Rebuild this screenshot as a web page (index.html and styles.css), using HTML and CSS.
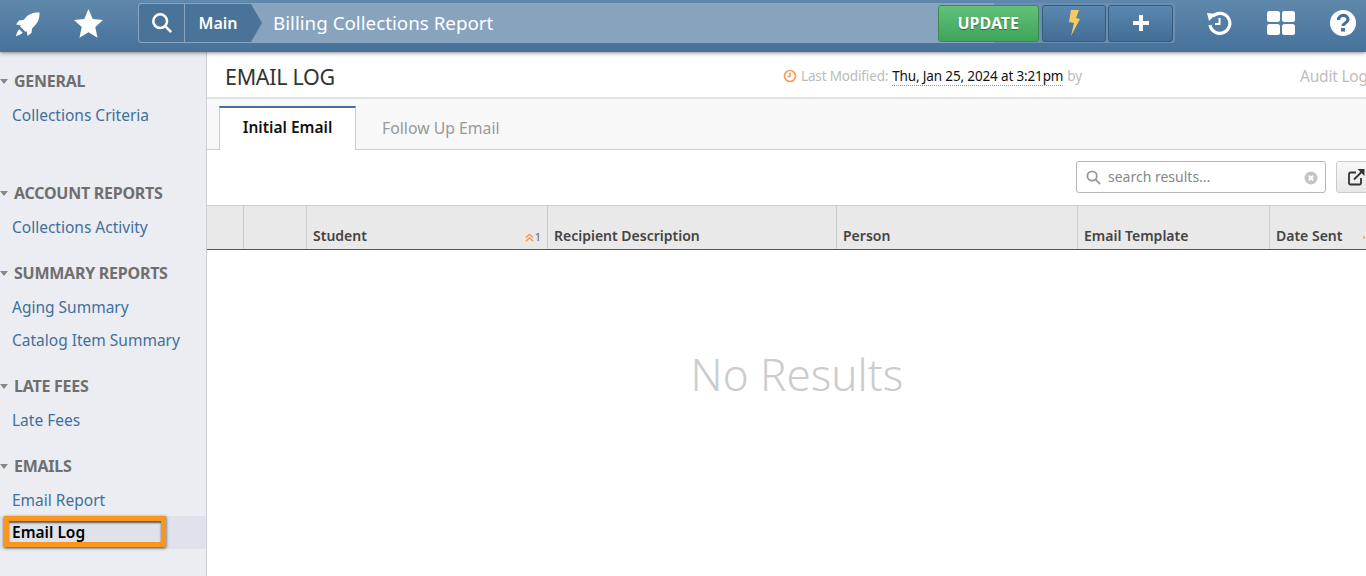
FILE: index.html
```html
<!DOCTYPE html>
<html lang="en">
<head>
<meta charset="utf-8">
<title>Billing Collections Report</title>
<link rel="stylesheet" href="styles.css">
</head>
<body>
<header class="topbar">
  <div class="top-left">
    <svg class="ico rocket" viewBox="0 0 24 24"><path d="M23.500.5c-6.500-.5-11 1.800-14 5.800L8.500 7.500 3.800 8.200 1 12l4.600.6-.6 1.400 5 5 1.400-.6.600 4.600 3.800-2.800.7-4.700 1.200-1C20.800 11.600 24 7 23.500.5zM4 16.500C2.500 18 1.500 21 .8 23.200 3 22.500 6 21.500 7.500 20z"/></svg>
    <svg class="ico star" viewBox="0 0 24 24"><path d="M12 0l3.500 8.300 8.500.8-6.400 5.800 1.900 8.900L12 19.200l-7.500 4.600 1.900-8.900L0 9.100l8.500-.8z"/></svg>
  </div>
  <div class="crumbs">
    <div class="crumb-search"><svg class="ico mag" viewBox="0 0 24 24"><circle cx="10" cy="10" r="7.500"/><path d="M15.500 15.500L22 22"/></svg></div>
    <div class="crumb-main">Main</div>
    <div class="crumb-title">Billing Collections Report</div>
  </div>
  <div class="actions">
    <button class="btn-update">UPDATE</button>
    <button class="btn-blue"><svg class="bolt" viewBox="0 0 14 26"><path d="M4 0h8L9 8l4 1-9 17 3-13-5-1z"/></svg></button>
    <button class="btn-blue"><svg class="plus" viewBox="0 0 16 16"><path d="M6 0h4v6h6v4h-6v6H6v-6H0V6h6z"/></svg></button>
  </div>
  <div class="top-right">
    <svg class="ico hist" viewBox="0 0 26 26"><path class="hist-ring" d="M6.500 6.500A10 10 0 1 1 4 15"/><path class="hist-fill" d="M1 3l9 1-7 7z"/><path class="hist-hand" d="M13.500 8v6H9"/></svg>
    <svg class="ico grid-ico" viewBox="0 0 28 24"><rect x="0" y="0" width="13" height="11" rx="2.500"/><rect x="15" y="0" width="13" height="11" rx="2.500"/><rect x="0" y="13" width="13" height="11" rx="2.500"/><rect x="15" y="13" width="13" height="11" rx="2.500"/></svg>
    <svg class="ico help" viewBox="0 0 26 26"><circle cx="13" cy="13" r="13"/><path class="help-q" d="M8.500 10c0-6 9.500-6 9.500-.5 0 3.500-5 3.500-5 6.500"/><rect class="help-dot" x="11" y="18" width="4" height="3.500"/></svg>
  </div>
</header>
<div class="layout">
  <nav class="sidebar">
    <h3 class="group first">GENERAL</h3>
    <a class="link">Collections Criteria</a>
    <h3 class="group gap">ACCOUNT REPORTS</h3>
    <a class="link">Collections Activity</a>
    <h3 class="group">SUMMARY REPORTS</h3>
    <a class="link">Aging Summary</a>
    <a class="link">Catalog Item Summary</a>
    <h3 class="group">LATE FEES</h3>
    <a class="link">Late Fees</a>
    <h3 class="group">EMAILS</h3>
    <a class="link">Email Report</a>
    <a class="link active">Email Log<span class="callout"></span></a>
  </nav>
  <main class="content">
    <div class="page-head">
      <h1>EMAIL LOG</h1>
      <div class="modified">
        <svg class="clock" viewBox="0 0 14 14"><circle cx="7" cy="7" r="5.500"/><path d="M7 3.500V7.500H4.500"/></svg>
        <span class="muted">Last Modified:</span>
        <span class="date">Thu, Jan 25, 2024 at 3:21pm</span>
        <span class="muted">by</span>
      </div>
      <div class="audit">Audit Log</div>
    </div>
    <div class="tabs">
      <div class="tab on">Initial Email</div>
      <div class="tab">Follow Up Email</div>
    </div>
    <div class="toolbar">
      <div class="search">
        <svg class="s-mag" viewBox="0 0 16 16"><circle cx="6.500" cy="6.500" r="5"/><path d="M10.300 10.300L15 15"/></svg>
        <span class="s-text">search results...</span>
        <svg class="s-x" viewBox="0 0 14 14"><circle cx="7" cy="7" r="6.500"/><path d="M4.800 4.800l4.400 4.400M9.200 4.800l-4.400 4.400"/></svg>
      </div>
      <button class="export"><svg viewBox="0 0 18 18"><path class="e1" d="M14 10v5a1.500 1.500 0 0 1-1.500 1.500h-9A1.500 1.500 0 0 1 2 15V6a1.500 1.500 0 0 1 1.500-1.500H9"/><path class="e1" d="M7 11.500L15 3.500"/><path class="e2" d="M10.500 1h7v7z"/></svg></button>
    </div>
    <div class="thead">
      <div class="th c1"></div>
      <div class="th c2"></div>
      <div class="th c3">Student<span class="sort"><svg viewBox="0 0 10 9"><path d="M1 4.500l4-3.500 4 3.500M1 8.500l4-3.500 4 3.500"/></svg>1</span></div>
      <div class="th c4">Recipient Description</div>
      <div class="th c5">Person</div>
      <div class="th c6">Email Template</div>
      <div class="th c7">Date Sent<span class="sort-edge"></span></div>
    </div>
    <div class="empty">No Results</div>
  </main>
</div>
</body>
</html>
```
FILE: styles.css
```css
* { box-sizing: border-box; }
html, body { margin: 0; height: 100%; overflow: hidden; }
body { width: 1366px; height: 576px; font-family: "Noto Sans", "Open Sans", sans-serif; background: #fff; color: #222; display: flex; flex-direction: column; }
button { font-family: inherit; padding: 0; cursor: default; }

.topbar { height: 52px; flex: none; display: flex; align-items: center; padding-bottom: 6px; background: linear-gradient(#5f88ab, #46719a); box-shadow: 0 1px 4px rgba(0,0,0,.45); position: relative; z-index: 2; }
.ico { display: block; fill: #fff; }
.top-left { width: 138px; flex: none; display: flex; align-items: center; padding-left: 15px; gap: 34px; }
.rocket { width: 25px; height: 25px; margin-top: 2px; }
.star { width: 29px; height: 29px; }
.crumbs { width: 800px; height: 40px; flex: none; display: flex; align-items: stretch; border: 1px solid #8aa5bf; border-right: 0; border-radius: 4px 0 0 4px; background: #87a3bd; }
.crumb-search { width: 46px; display: flex; align-items: center; justify-content: center; background: #4a7399; border-right: 1px solid #8aa5bf; border-radius: 3px 0 0 3px; }
.mag { width: 22px; height: 22px; fill: none; stroke: #fff; stroke-width: 2.800; }
.crumb-main { width: 66px; position: relative; display: flex; align-items: center; justify-content: center; background: #4a7399; color: #fff; font-weight: 600; font-size: 16px; }
.crumb-main::after { content: ""; position: absolute; left: 100%; top: 0; border-left: 11px solid #4a7399; border-top: 19px solid transparent; border-bottom: 19px solid transparent; }
.crumb-title { flex: 1; display: flex; align-items: center; padding-left: 22px; color: #fff; font-size: 18.800px; }
.actions { height: 40px; width: 237px; flex: none; display: flex; align-items: center; border-radius: 0 4px 4px 0; background: linear-gradient(90deg, #87a3bd 0, #87a3bd 56px, #6b8fb0 56px); }
.btn-update { width: 101px; height: 37px; margin-right: 3px; border: 1px solid #3c8a50; border-radius: 3px; background: linear-gradient(#62c079, #3fa55b); color: #fff; font-weight: 700; font-size: 16px; text-shadow: 0 1px 1px rgba(0,0,0,.4); }
.btn-blue { width: 65px; height: 37px; margin-right: 2px; border: 1px solid #355a7d; border-radius: 3px; background: linear-gradient(#5a88b0, #436d94); display: flex; align-items: center; justify-content: center; }
.bolt { width: 14px; height: 26px; fill: #f8cb62; }
.plus { width: 16px; height: 16px; fill: #fff; }
.top-right { flex: 1; display: flex; align-items: center; padding-left: 31px; }
.hist { width: 26px; height: 26px; fill: none; margin-right: 35px; }
.hist-ring { fill: none; stroke: #fff; stroke-width: 3.200; }
.hist-fill { fill: #fff; }
.hist-hand { fill: none; stroke: #fff; stroke-width: 2; }
.grid-ico { width: 28px; height: 24px; margin-right: 35px; }
.help { width: 26px; height: 26px; }
.help-q { fill: none; stroke: #46719a; stroke-width: 3.200; }
.help-dot { fill: #46719a; }

.layout { flex: 1; display: flex; min-height: 0; }
.sidebar { width: 207px; flex: none; background: #ebedf3; border-right: 1px solid #cfd0d3; padding-top: 18px; display: flex; flex-direction: column; }
.group { margin: 18px 0 7px; height: 22px; line-height: 22px; font-size: 16px; font-weight: 700; color: #6f6f6f; padding-left: 14px; position: relative; letter-spacing: -.25px; }
.group.first { margin-top: 0; }
.group.gap { margin-top: 50px; }
.group::before { content: ""; position: absolute; left: 0; top: 9px; border-top: 5px solid #888; border-left: 4px solid transparent; border-right: 4px solid transparent; }
.link { display: block; height: 33px; line-height: 33px; padding-left: 12px; color: #41709b; font-size: 15.500px; position: relative; flex: none; }
.link.active { color: #000; font-weight: 600; background: #dfe2ea; font-size: 15.500px; margin-top: -1px; }
.callout { position: absolute; left: 4px; top: 0; width: 162px; height: 31px; border: 5px solid #f8961e; box-shadow: 0 1px 3px rgba(0,0,0,.7), inset 0 2px 2px rgba(0,0,0,.6); }

.content { flex: 1; min-width: 0; overflow: hidden; display: flex; flex-direction: column; }
.page-head { height: 47px; flex: none; border-bottom: 2px solid #e2e2e2; display: flex; align-items: center; padding: 3px 0 0 18px; white-space: nowrap; }
h1 { margin: 0; font-size: 21.500px; font-weight: 400; color: #333; width: 558px; flex: none; letter-spacing: -.3px; }
.modified { display: flex; align-items: center; font-size: 13.500px; letter-spacing: -.15px; gap: 4px; width: 517px; flex: none; }
.clock { width: 14px; height: 14px; fill: none; stroke: #f79a53; stroke-width: 1.600; }
.muted { color: #bbb; }
.date { color: #111; border-bottom: 1px dotted #999; line-height: 18px; }
.audit { color: #bdbdbd; font-size: 15.500px; letter-spacing: -.2px; }
.tabs { height: 51px; flex: none; background: #f8f8f8; border-bottom: 1px solid #ccc; display: flex; padding: 7px 0 0 12px; }
.tab { height: 44px; line-height: 44px; padding: 0 26px; font-size: 15.800px; color: #999; }
.tab.on { width: 137px; padding: 0; text-align: center; line-height: 38px; color: #111; font-weight: 600; font-size: 15.500px; background: #fff; border: 1px solid #ccc; border-top: 2px solid #46719a; border-bottom: 0; }
.toolbar { height: 55px; flex: none; display: flex; align-items: flex-start; padding: 11px 0 0 869px; gap: 10px; }
.search { width: 250px; height: 32px; flex: none; border: 1px solid #b5b5b5; border-radius: 3px; display: flex; align-items: center; padding: 0 7px 0 9px; }
.s-mag { width: 15px; height: 15px; fill: none; stroke: #999; stroke-width: 2; flex: none; }
.s-text { flex: 1; margin: 0 0 2px 7px; color: #888; font-size: 14px; }
.s-x { width: 14px; height: 14px; flex: none; margin-top: 2px; }
.s-x circle { fill: #c4c4c4; }
.s-x path { stroke: #fff; stroke-width: 2; }
.export { width: 40px; height: 32px; flex: none; border: 1px solid #ccc; border-radius: 3px; background: linear-gradient(#f8f8f8, #e8e8e8); display: flex; align-items: center; padding-left: 10px; }
.export svg { width: 18px; height: 18px; flex: none; }
.e1 { fill: none; stroke: #333; stroke-width: 1.800; }
.e2 { fill: #333; }
.thead { height: 45px; flex: none; display: flex; background: #e9e9e9; border-top: 1px solid #ccc; border-bottom: 1px solid #555; white-space: nowrap; }
.th { flex: none; border-right: 1px solid #ccc; padding: 21px 0 0 6px; font-size: 14px; font-weight: 600; color: #444; line-height: 18px; position: relative; }
.c1 { width: 37px; }
.c2 { width: 63px; }
.c3 { width: 241px; }
.c4 { width: 289px; }
.c5 { width: 241px; }
.c6 { width: 192px; }
.c7 { width: 120px; border-right: 0; }
.sort { position: absolute; right: 6px; top: 22px; font-size: 11px; font-weight: 400; color: #666; display: flex; align-items: center; gap: 1px; }
.sort svg { width: 9px; height: 9px; fill: none; stroke: #f79a53; stroke-width: 1.600; }
.sort-edge { position: absolute; left: 93px; top: 30px; width: 2px; height: 3px; background: #f7b27a; }
.empty { flex: 1; text-align: center; padding: 95px 0 0 21px; font-size: 44px; font-weight: 300; color: #ccc; line-height: 58px; }
```
